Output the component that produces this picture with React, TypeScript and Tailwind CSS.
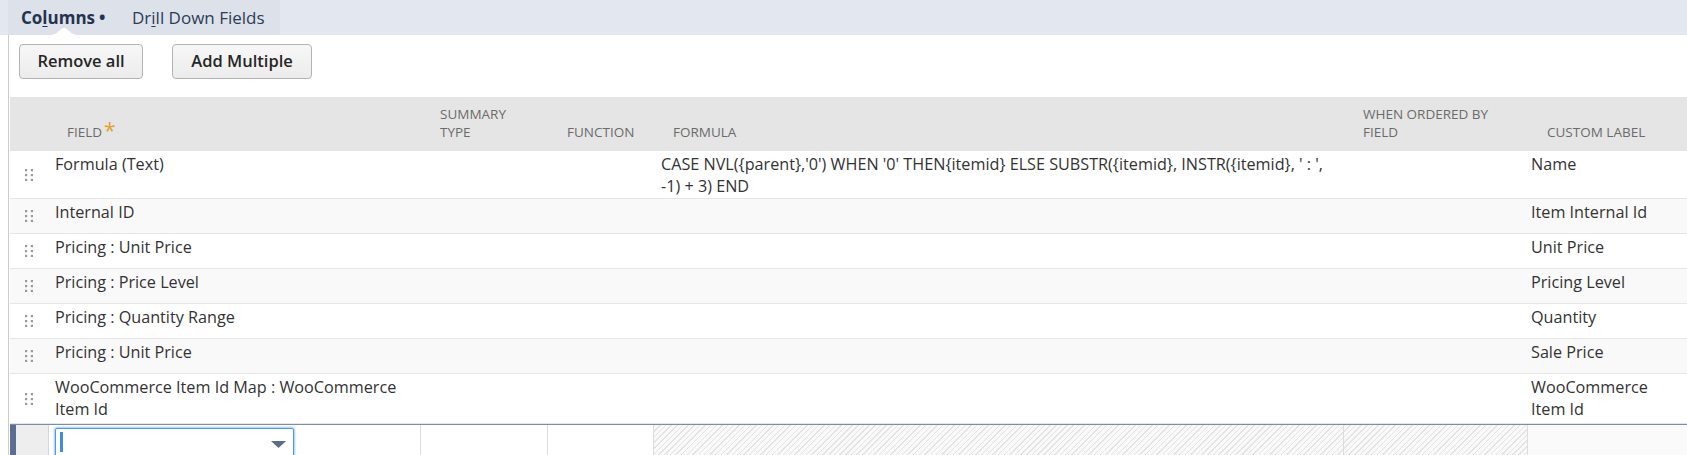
import React from 'react';

const cols = 'grid grid-cols-[38px_372px_127px_106px_690px_184px_1fr]';

const rows = [
  {
    field: ['Formula (Text)'],
    formula: ["CASE NVL({parent},'0') WHEN '0' THEN{itemid} ELSE SUBSTR({itemid}, INSTR({itemid}, ' : ',", '-1) + 3) END'],
    label: ['Name'],
    h: 'h-[48px]',
  },
  { field: ['Internal ID'], formula: [], label: ['Item Internal Id'], h: 'h-[35px]' },
  { field: ['Pricing : Unit Price'], formula: [], label: ['Unit Price'], h: 'h-[35px]' },
  { field: ['Pricing : Price Level'], formula: [], label: ['Pricing Level'], h: 'h-[35px]' },
  { field: ['Pricing : Quantity Range'], formula: [], label: ['Quantity'], h: 'h-[35px]' },
  { field: ['Pricing : Unit Price'], formula: [], label: ['Sale Price'], h: 'h-[35px]' },
  {
    field: ['WooCommerce Item Id Map : WooCommerce', 'Item Id'],
    formula: [],
    label: ['WooCommerce', 'Item Id'],
    h: 'h-[50px]',
  },
];

const Lines = ({ lines }: { lines: string[] }) => (
  <>
    {lines.map((l, i) => (
      <div key={i} className="whitespace-nowrap">{l}</div>
    ))}
  </>
);

const DragHandle = () => (
  <svg width="8" height="12" viewBox="0 0 8 12" fill="#999999">
    <rect x="0" y="0" width="2.2" height="2.2" />
    <rect x="5.8" y="0" width="2.2" height="2.2" />
    <rect x="0" y="5" width="2.2" height="2.2" />
    <rect x="5.8" y="5" width="2.2" height="2.2" />
    <rect x="0" y="9.8" width="2.2" height="2.2" />
    <rect x="5.8" y="9.8" width="2.2" height="2.2" />
  </svg>
);

const hatch =
  'bg-[repeating-linear-gradient(135deg,#e3e3e3_0px,#e3e3e3_1px,#f9f9f9_1px,#f9f9f9_4px)]';

export default function App() {
  return (
    <div className="relative w-[1687px] h-[455px] overflow-hidden bg-white font-['Open_Sans',sans-serif]">
      {/* tabs */}
      <div className="flex h-[35px] bg-[#e2e7f0]">
        <div className="ml-[8px] flex items-center bg-[#dde1e9] pr-[15px] text-[17px]">
          <div className="w-[112px] pl-[13px] font-bold text-[#24344f]">
            Co<span className="underline underline-offset-2">l</span>umns<span className="ml-[4px]">•</span>
          </div>
          <div className="pl-[12px] text-[#2c3d58]">
            Dr<span className="underline underline-offset-2">i</span>ll Down Fields
          </div>
        </div>
      </div>
      <svg className="absolute left-[50px] top-[28px]" width="28" height="7" viewBox="0 0 28 7">
        <path d="M0 7 C8 7 10 0 14 0 C18 0 20 7 28 7 Z" fill="#ffffff" />
      </svg>

      <div className="ml-[8px] h-[420px] border-l border-[#cccccc]">
        {/* buttons */}
        <div className="flex gap-[29px] pl-[10px] pt-[9px]">
          <button className="h-[35px] w-[124px] rounded-[4px] border border-[#b3b3b3] bg-gradient-to-b from-[#f7f7f7] to-[#ececec] text-[16.5px] font-semibold text-[#262626]">
            Remove all
          </button>
          <button className="h-[35px] w-[140px] rounded-[4px] border border-[#b3b3b3] bg-gradient-to-b from-[#f7f7f7] to-[#ececec] text-[16.5px] font-semibold text-[#262626]">
            Add Multiple
          </button>
        </div>

        {/* table */}
        <div className="ml-[1px] mt-[18px]">
          <div className={`${cols} h-[54px] items-end bg-[#e5e5e5] pb-[10px] text-[13.5px] leading-[18px] text-[#6b6b6b] uppercase`}>
            <div />
            <div className="pl-[19px]">
              Field<span className="relative -top-[2px] ml-[2px] align-top text-[21px] leading-[18px] text-[#e3a12f]">*</span>
            </div>
            <div className="pl-[20px]">Summary<br />Type</div>
            <div className="pl-[20px]">Function</div>
            <div className="pl-[20px]">Formula</div>
            <div className="pl-[20px]">When ordered by<br />Field</div>
            <div className="pl-[20px]">Custom Label</div>
          </div>

          {rows.map((r, i) => (
            <div
              key={i}
              className={`${cols} ${r.h} border-b border-[#e6e6e6] text-[16.2px] leading-[22px] text-[#333333] ${i % 2 === 1 ? 'bg-[#f9f9f9]' : 'bg-white'}`}
            >
              <div className="flex items-center pl-[15px]">
                <DragHandle />
              </div>
              <div className="pl-[7px] pt-[2px]"><Lines lines={r.field} /></div>
              <div />
              <div />
              <div className="pl-[8px] pt-[2px]"><Lines lines={r.formula} /></div>
              <div />
              <div className="pl-[4px] pt-[2px]"><Lines lines={r.label} /></div>
            </div>
          ))}

          {/* edit row */}
          <div className={`${cols} h-[40px] border-t border-[#7b8cad]`}>
            <div className="border-l-[6px] border-[#5b6e91] bg-[#eeeeee]" />
            <div className="border-l border-[#d6d6d6] bg-white pl-[6px] pt-[3px]">
              <div className="relative h-[32px] w-[239px] rounded-[2px] border border-[#4d9be6] shadow-[0_0_2px_1px_#9cc8f2]">
                <div className="absolute left-[4px] top-[3px] h-[20px] w-[3px] bg-[#3b8ee6]" />
                <svg className="absolute left-[215px] top-[12px]" width="15" height="7" viewBox="0 0 15 7">
                  <path d="M0 0 H15 L7.5 7 Z" fill="#5d6c88" />
                </svg>
              </div>
            </div>
            <div className="border-l border-[#dddddd] bg-white" />
            <div className="border-l border-[#dddddd] bg-white" />
            <div className={`border-l border-[#dddddd] ${hatch}`} />
            <div className={`border-l border-[#dddddd] ${hatch}`} />
            <div className="border-l border-[#dddddd] bg-[#fafafa]" />
          </div>
        </div>
      </div>
    </div>
  );
}
